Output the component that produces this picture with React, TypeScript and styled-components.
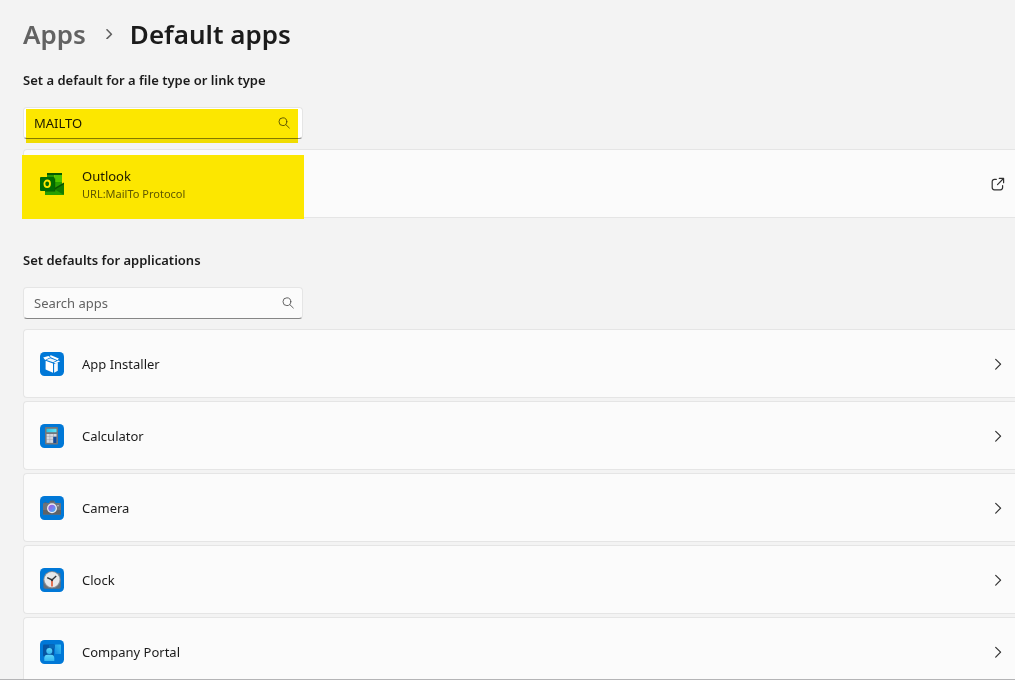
import React from "react";
import styled, { createGlobalStyle, css } from "styled-components";

const GlobalStyle = createGlobalStyle`
  *, *::before, *::after { box-sizing: border-box; }
  body {
    margin: 0;
    background: #f3f3f3;
    color: #1b1b1b;
    font-family: "Noto Sans", "Open Sans", sans-serif;
    font-size: 13px;
    line-height: 20px;
  }
`;

const highlight = css`
  content: "";
  position: absolute;
  background: #fce700;
  pointer-events: none;
`;

const Page = styled.main`
  height: 100vh;
  overflow: hidden;
  padding: 16px 0 0 23px;
  border-bottom: 1px solid #b4b4b6;
`;

const Breadcrumb = styled.nav`
  display: flex;
  align-items: center;
  gap: 17px;
  margin-bottom: 18px;
  font-size: 26px;
  line-height: 36px;
  font-weight: 600;
`;

const CrumbLink = styled.a`
  color: #626262;
  text-decoration: none;
`;

const PageTitle = styled.h1`
  margin: 0;
  font: inherit;
`;

const Section = styled.section`
  margin-bottom: 32px;
`;

const SectionTitle = styled.h2`
  margin: 0 0 17px;
  font-size: 13px;
  line-height: 20px;
  font-weight: 600;
`;

const SearchBox = styled.div<{ $marked?: boolean }>`
  position: relative;
  display: flex;
  align-items: center;
  width: 280px;
  height: 32px;
  margin-bottom: 10px;
  padding: 0 ${(p) => (p.$marked ? 12 : 8)}px 0 10px;
  border: 1px solid #e5e5e5;
  border-bottom-color: #868686;
  border-radius: 4px;
  background: ${(p) => (p.$marked ? "#ffffff" : "#fbfbfb")};

  ${(p) =>
    p.$marked &&
    css`
      &::after {
        ${highlight}
        inset: 1px 4px -5px 2px;
        mix-blend-mode: multiply;
      }
    `}
`;

const SearchInput = styled.input`
  flex: 1;
  min-width: 0;
  padding: 0;
  border: 0;
  outline: 0;
  background: transparent;
  color: #1b1b1b;
  font: inherit;

  &::placeholder {
    color: #636363;
    opacity: 1;
  }
`;

const SearchButton = styled.button`
  display: flex;
  padding: 0;
  border: 0;
  background: transparent;
  color: #555;
`;

const RowList = styled.ul`
  display: flex;
  flex-direction: column;
  gap: 3px;
  margin: 0;
  padding: 0;
  list-style: none;
`;

const Row = styled.button`
  display: flex;
  align-items: center;
  gap: 18px;
  width: 100%;
  height: 69px;
  padding: 0 9px 0 16px;
  border: 1px solid #e5e5e5;
  border-right: 0;
  border-radius: 4px 0 0 4px;
  background: #fbfbfb;
  color: #1b1b1b;
  font: inherit;
  text-align: left;
`;

const RowItem = styled.li<{ $marked?: boolean }>`
  position: relative;

  ${(p) =>
    p.$marked &&
    css`
      &::after {
        ${highlight}
        inset: 6px auto -1px -1px;
        width: 282px;
      }

      ${Row} > * {
        position: relative;
        z-index: 1;
        mix-blend-mode: multiply;
      }
    `}
`;

const RowText = styled.span`
  display: flex;
  flex: 1;
  flex-direction: column;
`;

const RowDetail = styled.span`
  color: #606060;
  font-size: 11px;
  line-height: 16px;
`;

const AppIcon = styled.svg.attrs({ viewBox: "0 0 24 24", "aria-hidden": true })`
  flex: none;
  width: 24px;
  height: 24px;
`;

const Glyph = styled.svg.attrs({ "aria-hidden": true })<{ $size: number }>`
  flex: none;
  width: ${(p) => p.$size}px;
  height: ${(p) => p.$size}px;
  fill: none;
  stroke: currentColor;
  stroke-linecap: round;
  stroke-linejoin: round;
`;

const SearchGlyph = () => (
  <Glyph $size={12} viewBox="0 0 12 12" strokeWidth="0.9">
    <circle cx="4.9" cy="4.7" r="3.9" />
    <path d="M7.8 7.6 11.3 11" />
  </Glyph>
);

const CrumbChevron = () => (
  <Glyph $size={10} viewBox="0 0 10 10" color="#606060" strokeWidth="1.6">
    <path d="M4 0.8 8.4 5.2 4 9.6" />
  </Glyph>
);

const RowChevron = () => (
  <Glyph $size={16} viewBox="0 0 16 16" color="#303030" strokeWidth="1.2">
    <path d="M5.7 3.3 10.6 8.2 5.7 13.1" />
  </Glyph>
);

const OpenGlyph = () => (
  <Glyph $size={16} viewBox="0 0 16 16" color="#303030" strokeWidth="1.2">
    <path d="M6.3 3.4H4.4A2.2 2.2 0 0 0 2.2 5.6v6A2.2 2.2 0 0 0 4.4 13.8h6a2.2 2.2 0 0 0 2.2-2.2V9.5" />
    <path d="M9.3 2.4h4.3v4.3M13.5 2.5 7.5 8.6" />
  </Glyph>
);

const OutlookIcon = () => (
  <AppIcon>
    <path d="M7 3h7.5v9H7z" fill="#28a8ea" />
    <path d="M14.5 3H22v7h-7.5z" fill="#50d9ff" />
    <path d="M7 10h15v5H7z" fill="#28b0ea" />
    <path d="M7 1h15v2H7z" fill="#0364b8" />
    <path d="M5 14h12l7 9H5z" fill="#28b0ea" />
    <path d="M24 11v12L14.5 17.2z" fill="#1488d8" />
    <path d="M24 10.5v1.8l-9 5.2v-1.8z" fill="#0a5a9a" />
    <path d="M14 6.5h1.2V19.5H5v-1h9z" fill="#0a62a8" />
    <rect y="5" width="14.5" height="14" rx="1" fill="#0078d4" />
    <ellipse cx="7.2" cy="11.8" rx="2.8" ry="3.3" fill="none" stroke="#fff" strokeWidth="1.8" />
  </AppIcon>
);

const Tile = () => <rect width="24" height="24" rx="4.5" fill="#0078d7" />;

const InstallerIcon = () => (
  <AppIcon>
    <Tile />
    <path d="M5.6 8.8 13 11.6V20.8L5.6 17.6z" fill="#fff" />
    <path d="M14.1 12 17.8 10.4v8.4l-3.7 2z" fill="#f3f9fe" />
    <path d="M3.2 5.6 8.4 4l2 1.3-5.2 2.6z" fill="#fff" />
    <path d="M10.4 3 18.8 6.4l-1.2 1.8-7.4-3.2z" fill="#fff" />
    <path d="M13.6 10.8 18.2 8.6l2 .6-4.8 2.3z" fill="#fff" />
    <path d="M6.4 8 10.2 6.2 16.4 8.6l-3.3 1.6z" fill="#eaf5fd" />
  </AppIcon>
);

const CalculatorIcon = () => (
  <AppIcon>
    <defs>
      <linearGradient id="calc-display" x1="0" x2="1">
        <stop offset="0" stopColor="#29c3e6" />
        <stop offset="1" stopColor="#62e4f4" />
      </linearGradient>
    </defs>
    <Tile />
    <rect x="5" y="3" width="13" height="17.5" rx="1" fill="#73777c" />
    <rect x="6.5" y="4.8" width="10" height="3.4" fill="url(#calc-display)" />
    <rect x="6.5" y="10" width="10" height="9" fill="#a2a7b0" />
    <g fill="#d6d9df">
      <rect x="6.8" y="10" width="2.8" height="2.5" />
      <rect x="10.2" y="10" width="2.8" height="2.5" />
      <rect x="13.6" y="10" width="2.8" height="2.5" />
      <rect x="6.8" y="13" width="2.8" height="2.5" />
      <rect x="10.2" y="13" width="2.8" height="2.5" />
      <rect x="6.8" y="16" width="2.8" height="2.7" />
      <rect x="10.2" y="16" width="2.8" height="2.7" />
    </g>
    <rect x="13.3" y="12.8" width="3.2" height="6.2" fill="#124a99" />
  </AppIcon>
);

const CameraIcon = () => (
  <AppIcon>
    <defs>
      <linearGradient id="camera-lens" x1="0" y1="0" x2="1" y2="1">
        <stop offset="0" stopColor="#a855d8" />
        <stop offset="0.5" stopColor="#7b7cf0" />
        <stop offset="1" stopColor="#35bdf2" />
      </linearGradient>
    </defs>
    <Tile />
    <path d="M4 7h5l1.2-2h4.2l1.2 2H20q1 0 1 1v10.5H3V8q0-1 1-1z" fill="#70747a" />
    <path d="M3 14h18v4.5H3z" fill="#5e6268" />
    <path d="M10.2 4.6h4v1.2h-4zM4.5 6.2h2v1h-2z" fill="#55616e" />
    <circle cx="12" cy="12.3" r="5" fill="#e8eaf2" />
    <circle cx="12" cy="12.3" r="3.6" fill="url(#camera-lens)" />
    <circle cx="18" cy="9.7" r="0.8" fill="#cbd2d8" />
  </AppIcon>
);

const ClockIcon = () => (
  <AppIcon>
    <Tile />
    <path d="M3.4 12V19q0 1.7 1.7 1.7H19q1.7 0 1.7-1.7V12zM18 4.6l2.4 1v4.6z" fill="#697078" />
    <circle cx="12" cy="11.6" r="8.6" fill="#8b8f94" />
    <circle cx="12" cy="11.6" r="7.6" fill="#e9e9ea" />
    <path d="M12 12v6.5" stroke="#e5532d" strokeWidth="1.6" />
    <path d="M7.2 9.6 12 12l4.2-4" fill="none" stroke="#303338" strokeWidth="1.4" />
    <circle cx="12" cy="12" r="1.2" fill="#303338" />
  </AppIcon>
);

const PortalIcon = () => (
  <AppIcon>
    <defs>
      <linearGradient id="portal-door" x1="0" y1="1" x2="1" y2="0">
        <stop offset="0" stopColor="#168ae0" />
        <stop offset="1" stopColor="#35c0f4" />
      </linearGradient>
      <linearGradient id="portal-person" x1="0" y1="0" x2="0" y2="1">
        <stop offset="0" stopColor="#5cd5fa" />
        <stop offset="1" stopColor="#35b5ef" />
      </linearGradient>
    </defs>
    <Tile />
    <path d="M4 4.5h10v12H4q-1 0-1-1v-10q0-1 1-1z" fill="#0755a2" />
    <path d="M9 4.5h6v4H9z" fill="#0869ba" />
    <rect x="15" y="4.5" width="6" height="9.5" rx="0.6" fill="url(#portal-door)" />
    <circle cx="9.3" cy="11" r="3" fill="url(#portal-person)" />
    <path d="M4.3 21v-2.8q0-3.4 3.4-3.4h3.2q3.4 0 3.4 3.4V21z" fill="url(#portal-person)" />
  </AppIcon>
);

const apps = [
  { name: "App Installer", Icon: InstallerIcon },
  { name: "Calculator", Icon: CalculatorIcon },
  { name: "Camera", Icon: CameraIcon },
  { name: "Clock", Icon: ClockIcon },
  { name: "Company Portal", Icon: PortalIcon },
];

export default function App() {
  return (
    <>
      <GlobalStyle />
      <Page>
        <Breadcrumb aria-label="Breadcrumb">
          <CrumbLink href="#apps">Apps</CrumbLink>
          <CrumbChevron />
          <PageTitle>Default apps</PageTitle>
        </Breadcrumb>

        <Section>
          <SectionTitle id="type-title">Set a default for a file type or link type</SectionTitle>
          <SearchBox $marked>
            <SearchInput type="text" aria-labelledby="type-title" defaultValue="MAILTO" />
            <SearchButton aria-label="Search file or link types">
              <SearchGlyph />
            </SearchButton>
          </SearchBox>
          <RowList>
            <RowItem $marked>
              <Row>
                <OutlookIcon />
                <RowText>
                  <span>Outlook</span>
                  <RowDetail>URL:MailTo Protocol</RowDetail>
                </RowText>
                <OpenGlyph />
              </Row>
            </RowItem>
          </RowList>
        </Section>

        <Section>
          <SectionTitle id="apps-title">Set defaults for applications</SectionTitle>
          <SearchBox>
            <SearchInput type="text" aria-labelledby="apps-title" placeholder="Search apps" />
            <SearchButton aria-label="Search apps">
              <SearchGlyph />
            </SearchButton>
          </SearchBox>
          <RowList>
            {apps.map(({ name, Icon }) => (
              <RowItem key={name}>
                <Row>
                  <Icon />
                  <RowText>{name}</RowText>
                  <RowChevron />
                </Row>
              </RowItem>
            ))}
          </RowList>
        </Section>
      </Page>
    </>
  );
}
